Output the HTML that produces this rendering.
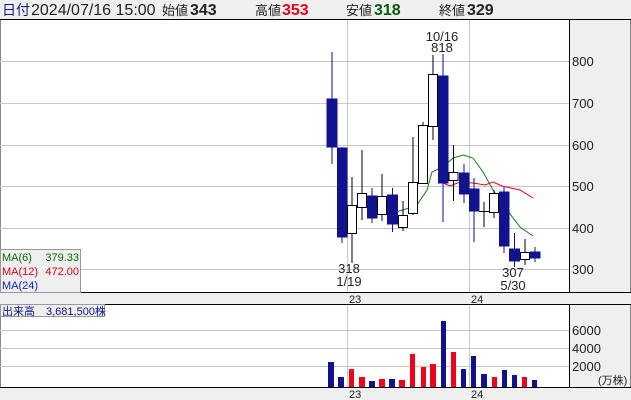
<!DOCTYPE html>
<html><head><meta charset="utf-8"><style>
body{margin:0;width:631px;height:400px;overflow:hidden;background:#fff;font-family:"Liberation Sans","Noto Sans CJK JP",sans-serif}
</style></head><body>
<svg width="631" height="400" xmlns="http://www.w3.org/2000/svg" style="display:block;font-family:'Liberation Sans','Noto Sans CJK JP',sans-serif">
<rect x="0" y="0" width="631" height="400" fill="#fff"/>
<rect x="0" y="0" width="631" height="19" fill="#efefef"/>
<line x1="0" y1="19.5" x2="631" y2="19.5" stroke="#000"/>
<text x="2" y="15" font-size="14" fill="#1a1a80">日付</text>
<text x="31" y="15" font-size="16" fill="#222">2024/07/16 15:00</text>
<text x="162" y="15" font-size="13" fill="#222">始値</text>
<text x="190" y="15" font-size="16" font-weight="bold" fill="#222">343</text>
<text x="255" y="15" font-size="13" fill="#222">高値</text>
<text x="282" y="15" font-size="16" font-weight="bold" fill="#e8001c">353</text>
<text x="346" y="15" font-size="13" fill="#222">安値</text>
<text x="374" y="15" font-size="16" font-weight="bold" fill="#0a5a0a">318</text>
<text x="439" y="15" font-size="13" fill="#222">終値</text>
<text x="467" y="15" font-size="16" font-weight="bold" fill="#222">329</text>
<!-- right axis -->
<rect x="569" y="20" width="62" height="380" fill="#efefef"/>
<line x1="569.5" y1="20" x2="569.5" y2="387" stroke="#000"/>
<line x1="0.5" y1="20" x2="0.5" y2="400" stroke="#888"/>
<line x1="630.5" y1="20" x2="630.5" y2="400" stroke="#888"/>
<!-- price grid -->
<g stroke="#c8c8c8">
<line x1="0" y1="61.5" x2="569" y2="61.5"/><line x1="0" y1="103.5" x2="569" y2="103.5"/>
<line x1="0" y1="145.5" x2="569" y2="145.5"/><line x1="0" y1="186.5" x2="569" y2="186.5"/>
<line x1="0" y1="228.5" x2="569" y2="228.5"/><line x1="0" y1="269.5" x2="569" y2="269.5"/>
<line x1="347.5" y1="20" x2="347.5" y2="292"/><line x1="469.5" y1="20" x2="469.5" y2="292"/>
<line x1="347.5" y1="305" x2="347.5" y2="387"/><line x1="469.5" y1="305" x2="469.5" y2="387"/>
<line x1="0" y1="330.5" x2="569" y2="330.5"/><line x1="0" y1="348.5" x2="569" y2="348.5"/><line x1="0" y1="366.5" x2="569" y2="366.5"/>
</g>
<g font-size="13" fill="#222">
<text x="572" y="66">800</text><text x="572" y="108">700</text><text x="572" y="150">600</text>
<text x="572" y="191">500</text><text x="572" y="233">400</text><text x="572" y="274">300</text>
<text x="572" y="335">6000</text><text x="572" y="353">4000</text><text x="572" y="371">2000</text>
<text x="598" y="384" font-size="11">(万株)</text>
</g>
<!-- axis bands -->
<rect x="0" y="292" width="631" height="13" fill="#efefef"/>
<line x1="0" y1="292.5" x2="631" y2="292.5" stroke="#000"/>
<line x1="0" y1="304.5" x2="631" y2="304.5" stroke="#000"/>
<rect x="0" y="387" width="631" height="13" fill="#efefef"/>
<line x1="0" y1="387.5" x2="631" y2="387.5" stroke="#000"/>
<g font-size="11" fill="#222"><text x="349" y="303">23</text><text x="471" y="303">24</text><text x="349" y="398">23</text><text x="471" y="398">24</text></g>
<!-- MA lines -->
<polyline fill="none" stroke="#e8001c" stroke-width="1" points="443,183 450,186 460,182 473,183 485,185 493,182 502,186 520,190 533,198"/>
<polyline fill="none" stroke="#1a7a1a" stroke-width="1" points="383,200 392,213 403,210 417,205 427,190 432,172 443,167 453,158 463,155 473,158 483,172 493,190 507,210 520,227 533,236"/>
<!-- candles -->
<g stroke="#10128f" fill="#10128f">
<line x1="332" y1="52" x2="332" y2="164"/><rect x="327" y="99" width="10" height="48"/>
<line x1="342" y1="147" x2="342" y2="243"/><rect x="337.5" y="148" width="9.5" height="89"/>
<line x1="372" y1="188" x2="372" y2="223"/><rect x="367.5" y="196" width="9.5" height="22"/>
<line x1="392.5" y1="188" x2="392.5" y2="232"/><rect x="387.5" y="195" width="10" height="29"/>
<line x1="443" y1="54" x2="443" y2="222"/><rect x="438.5" y="76" width="9.5" height="107"/>
<line x1="464" y1="164" x2="464" y2="203"/><rect x="459.5" y="173" width="9.5" height="21"/>
<line x1="474" y1="178" x2="474" y2="242"/><rect x="469.5" y="189" width="9.5" height="22"/>
<line x1="504" y1="187" x2="504" y2="253"/><rect x="499.5" y="192" width="9.5" height="54"/>
<line x1="514.5" y1="233" x2="514.5" y2="267"/><rect x="509.5" y="249" width="10" height="12"/>
<line x1="535" y1="247" x2="535" y2="262"/><rect x="530.5" y="252" width="9.5" height="6"/>
</g>
<g stroke="#000" fill="#fff">
<line x1="352" y1="177" x2="352" y2="263"/><rect x="347.5" y="205.5" width="9" height="28"/>
<line x1="362" y1="150" x2="362" y2="220"/><rect x="357.5" y="193.5" width="9" height="14"/>
<line x1="382" y1="174" x2="382" y2="221"/><rect x="377.5" y="196.5" width="9" height="18"/>
<line x1="403" y1="201" x2="403" y2="231"/><rect x="398.5" y="215.5" width="9" height="12"/>
<line x1="413" y1="137" x2="413" y2="215"/><rect x="408.5" y="182.5" width="9" height="31"/>
<line x1="423" y1="122" x2="423" y2="183"/><rect x="418.5" y="125.5" width="9" height="58"/>
<line x1="433" y1="55" x2="433" y2="140"/><rect x="428.5" y="74.5" width="9" height="52"/>
<line x1="453.5" y1="145" x2="453.5" y2="201"/><rect x="449" y="172.5" width="9" height="8"/>
<line x1="484" y1="202" x2="484" y2="227"/><line x1="479" y1="211.5" x2="489" y2="211.5"/>
<line x1="494" y1="190" x2="494" y2="218"/><rect x="489.5" y="193.5" width="9" height="19"/>
<line x1="525" y1="239" x2="525" y2="265"/><rect x="520.5" y="252.5" width="9" height="7"/>
</g>
<g font-size="13" fill="#222" text-anchor="middle">
<text x="442" y="41">10/16</text><text x="442" y="52">818</text>
<text x="349" y="273">318</text><text x="349" y="286">1/19</text>
<text x="513" y="277">307</text><text x="513" y="290">5/30</text>
</g>
<!-- MA legend -->
<rect x="0.5" y="249.5" width="80" height="43" fill="#efefef" stroke="#999"/>
<g font-size="11"><text x="2" y="261" fill="#0a6a0a">MA(6)</text><text x="79" y="261" fill="#0a6a0a" text-anchor="end">379.33</text>
<text x="2" y="275" fill="#e8001c">MA(12)</text><text x="79" y="275" fill="#e8001c" text-anchor="end">472.00</text>
<text x="2" y="289" fill="#1020d0">MA(24)</text></g>
<rect x="0.5" y="304.5" width="104" height="12" fill="#efefef" stroke="#999"/>
<text x="2" y="315" font-size="11" fill="#10128f">出来高　3,681,500株</text>
<!-- volume -->
<g fill="#10128f">
<rect x="328" y="362" width="6" height="25"/><rect x="338" y="377" width="6" height="10"/>
<rect x="369" y="381" width="6" height="6"/><rect x="389" y="379" width="6" height="8"/>
<rect x="441" y="321" width="5" height="66"/><rect x="461" y="369" width="5" height="18"/>
<rect x="471" y="356" width="5" height="31"/><rect x="481" y="374" width="6" height="13"/>
<rect x="502" y="370" width="5" height="17"/><rect x="512" y="375" width="5" height="12"/>
<rect x="532" y="380" width="5" height="7"/>
</g>
<g fill="#f0001c">
<rect x="349" y="369" width="5" height="18"/><rect x="359" y="377" width="6" height="10"/>
<rect x="379" y="379" width="6" height="8"/><rect x="399" y="380" width="6" height="7"/>
<rect x="410" y="354" width="5" height="33"/><rect x="421" y="367" width="5" height="20"/>
<rect x="430" y="364" width="6" height="23"/><rect x="451" y="352" width="5" height="35"/>
<rect x="492" y="377" width="5" height="10"/><rect x="522" y="377" width="5" height="10"/>
</g>
</svg>
</body></html>
